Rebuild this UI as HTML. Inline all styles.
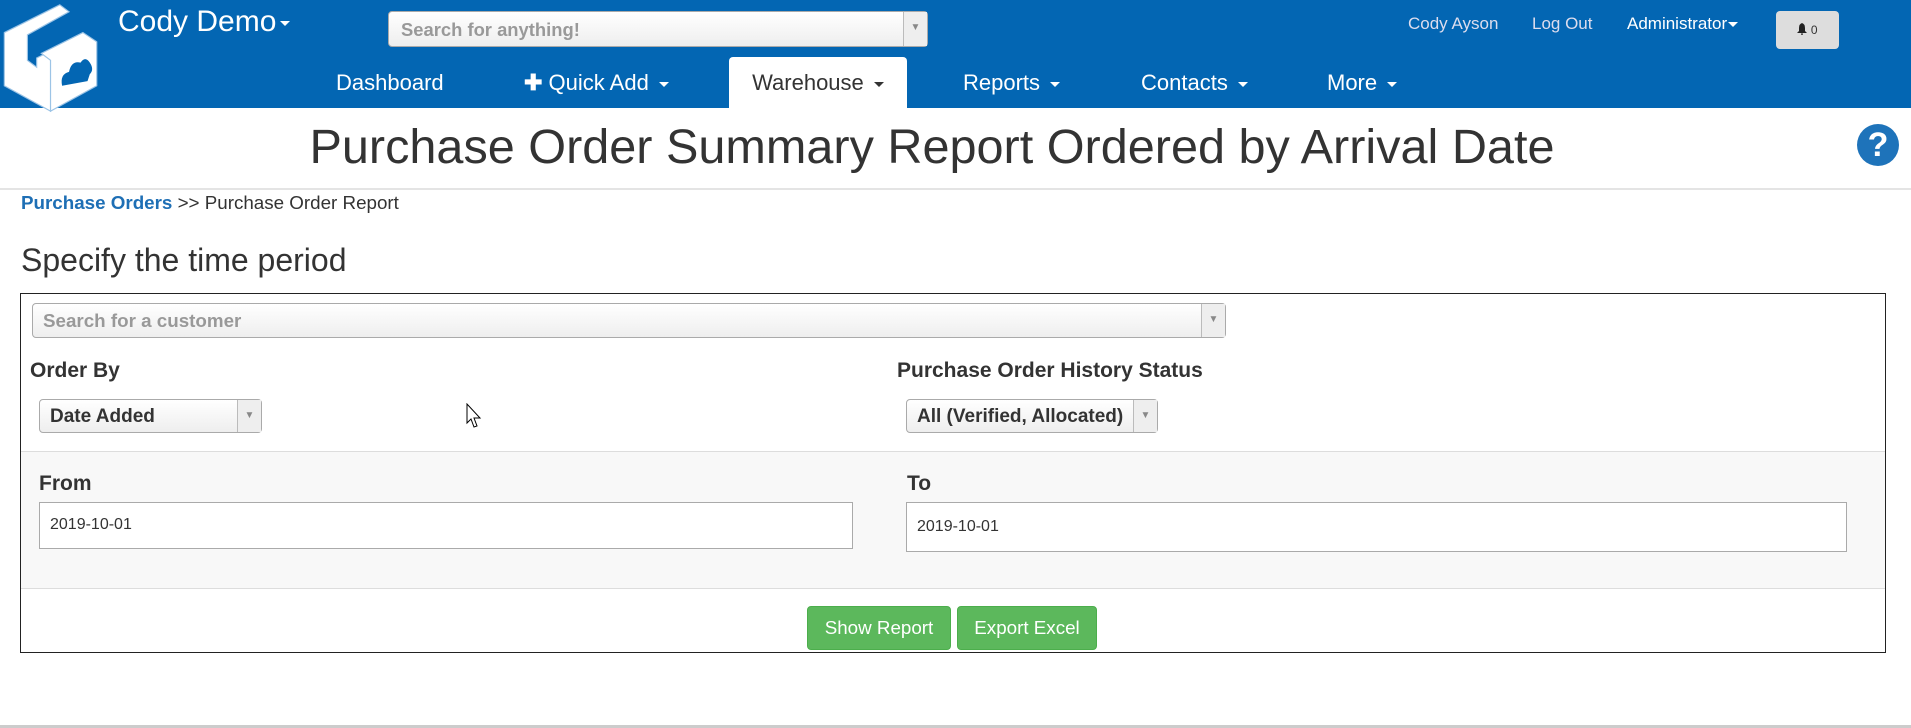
<!DOCTYPE html>
<html><head><meta charset="utf-8">
<style>
*{box-sizing:border-box;margin:0;padding:0}
body{width:1911px;height:728px;background:#fff;font-family:"Liberation Sans",Arial,sans-serif;color:#333;position:relative;overflow:hidden}
.abs{position:absolute}
.nav{left:0;top:0;width:1911px;height:108px;background:#0366b3}
.brand{left:118px;top:5px;color:#fff;font-size:30px;white-space:nowrap}
.caret{display:inline-block;width:0;height:0;border-left:5px solid transparent;border-right:5px solid transparent;border-top:5px solid currentColor;vertical-align:middle;margin-left:4px}
.search{left:388px;top:11px;width:540px;height:36px;background:linear-gradient(#fff,#eee);border:1px solid #aaa;border-radius:4px;font-weight:bold;color:#999;font-size:18.4px;padding:7px 12px}
.arr{position:absolute;right:0;top:0;bottom:0;width:24px;border-left:1px solid #bbb;background:#eee;color:#888;font-size:10px;text-align:center;padding-top:10px}
.ni{top:70px;color:#fff;font-size:22px;white-space:nowrap}
.tab{left:729px;top:57px;width:178px;height:51px;background:#fff;border-radius:4px 4px 0 0;color:#333;font-size:22px;text-align:center;padding-top:13px}
.tr{top:14px;font-size:17px;color:#dde;white-space:nowrap}
.bell{left:1776px;top:11px;width:63px;height:38px;background:#ddd;border-radius:4px;font-size:12px;color:#333;text-align:center;padding-top:12px}
h1{position:absolute;left:0;width:1864px;text-align:center;top:119px;font-weight:normal;font-size:48.6px;color:#333;line-height:56px;white-space:nowrap}
.help{left:1857px;top:124px;width:42px;height:42px;border-radius:50%;background:#1e73ba;color:#fff;font-weight:bold;font-size:34px;text-align:center;line-height:42px}
.hr{left:0;top:188px;width:1911px;height:2px;background:#e4e4e4}
.bc{left:21px;top:192px;font-size:18.8px}
.bc b{color:#1e6fb5}
.spec{left:21px;top:242px;font-size:32px}
.box{left:20px;top:293px;width:1866px;height:360px;border:1px solid #222}
.sel{background:linear-gradient(#fff,#eee);border:1px solid #aaa;border-radius:4px;font-size:19px;padding:7px 10px;position:absolute;white-space:nowrap}
.lbl{font-weight:bold;font-size:21px;color:#333;white-space:nowrap}
.gray{left:21px;top:451px;width:1864px;height:138px;background:#f8f8f8;border-top:1px solid #ddd;border-bottom:1px solid #ddd}
.inp{background:#fff;border:1px solid #aaa;font-size:16px;padding:13px 10px}
.btn{top:606px;height:44px;background:#5cb85c;border:1px solid #4cae4c;border-radius:4px;color:#fff;font-size:18.8px;text-align:center;padding-top:10px;white-space:nowrap}
</style></head><body>
<div class="abs nav"></div>
<svg class="abs" style="left:2px;top:2px" width="104" height="112" viewBox="0 0 90 96">
<g fill="#fff" stroke="#9cc4e6" stroke-width="1">
<path d="M2 26 L50 2 L58 8 L22 28 L22 50 L30 56 L30 48 L42 42 L42 94 L2 72 Z"/>
<path d="M34 44 L70 26 L82 34 L82 72 L42 94 L42 50 Z"/>
</g>
<path d="M52 72 Q50 62 58 60 Q60 50 68 52 Q72 46 76 52 Q80 58 76 62 L74 68 Z" fill="#0366b3"/>
</svg>
<div class="abs brand">Cody Demo<span class="caret"></span></div>
<div class="abs search">Search for anything!<div class="arr">▼</div></div>
<div class="abs ni" style="left:336px">Dashboard</div>
<div class="abs ni" style="left:524px"><b>✚</b> Quick Add <span class="caret"></span></div>
<div class="abs tab">Warehouse <span class="caret"></span></div>
<div class="abs ni" style="left:963px">Reports <span class="caret"></span></div>
<div class="abs ni" style="left:1141px">Contacts <span class="caret"></span></div>
<div class="abs ni" style="left:1327px">More <span class="caret"></span></div>
<div class="abs tr" style="left:1408px">Cody Ayson</div>
<div class="abs tr" style="left:1532px">Log Out</div>
<div class="abs tr" style="left:1627px;color:#fff">Administrator<span class="caret" style="margin-left:1px"></span></div>
<div class="abs bell"><svg width="10" height="12" viewBox="0 0 10 12" style="vertical-align:-1px"><path d="M5 0 Q2 1 2 5 L2 8 L0 10 L10 10 L8 8 L8 5 Q8 1 5 0 Z M4 10.5 L6 10.5 Q6 12 5 12 Q4 12 4 10.5 Z" fill="#222"/></svg> 0</div>
<h1>Purchase Order Summary Report Ordered by Arrival Date</h1>
<div class="abs help">?</div>
<div class="abs hr"></div>
<div class="abs bc"><b>Purchase Orders</b> &gt;&gt; Purchase Order Report</div>
<div class="abs spec">Specify the time period</div>
<div class="abs box"></div>
<div class="sel" style="left:32px;top:303px;width:1194px;height:35px;color:#999;font-weight:bold;padding-top:6px;font-size:18.8px">Search for a customer<div class="arr">▼</div></div>
<div class="abs lbl" style="left:30px;top:359px">Order By</div>
<div class="abs lbl" style="left:897px;top:359px">Purchase Order History Status</div>
<div class="sel" style="left:39px;top:399px;width:223px;height:34px;font-weight:bold;color:#333;padding-top:6px">Date Added<div class="arr">▼</div></div>
<div class="sel" style="left:906px;top:399px;width:252px;height:34px;font-weight:bold;color:#333;padding-top:6px">All (Verified, Allocated)<div class="arr">▼</div></div>
<div class="abs gray"></div>
<div class="abs lbl" style="left:39px;top:472px">From</div>
<div class="abs lbl" style="left:907px;top:472px">To</div>
<div class="abs inp" style="left:39px;top:502px;width:814px;height:47px">2019-10-01</div>
<div class="abs inp" style="left:906px;top:502px;width:941px;height:50px;padding-top:15px">2019-10-01</div>
<div class="abs btn" style="left:807px;width:144px">Show Report</div>
<div class="abs btn" style="left:957px;width:140px">Export Excel</div>
<svg class="abs" style="left:466px;top:403px" width="16" height="26" viewBox="0 0 16 26"><path d="M1 1 L1 20 L5 16 L8 24 L11 23 L8 15 L14 15 Z" fill="#fff" stroke="#000" stroke-width="1"/></svg>
<div class="abs" style="left:0;top:725px;width:1911px;height:3px;background:#ccc"></div>
</body></html>
